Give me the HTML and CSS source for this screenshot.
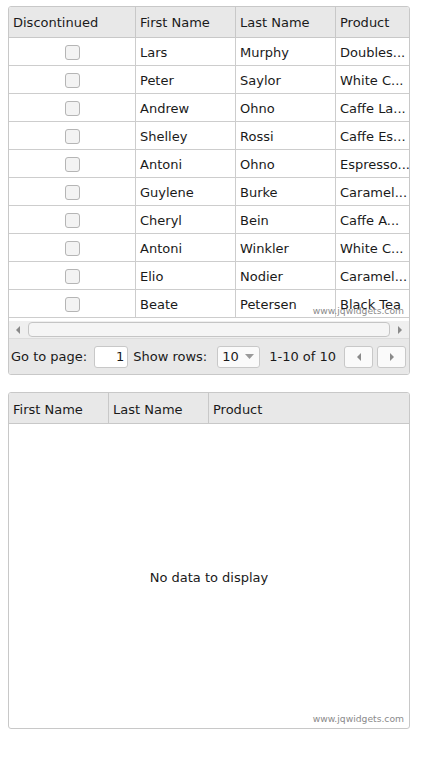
FILE: index.html
```html
<!DOCTYPE html>
<html>
<head>
<meta charset="utf-8">
<link rel="stylesheet" href="styles.css">
</head>
<body>
<div class="grid g1">
  <div class="head">
    <div class="hc c1">Discontinued</div>
    <div class="hc c2">First Name</div>
    <div class="hc c2">Last Name</div>
    <div class="hc c2">Product</div>
  </div>
  <div class="body b1">
    <div class="row"><div class="cell c1 chk"><span class="box"></span></div><div class="cell c2">Lars</div><div class="cell c2">Murphy</div><div class="cell c2">Doubles...</div></div>
    <div class="row"><div class="cell c1 chk"><span class="box"></span></div><div class="cell c2">Peter</div><div class="cell c2">Saylor</div><div class="cell c2">White C...</div></div>
    <div class="row"><div class="cell c1 chk"><span class="box"></span></div><div class="cell c2">Andrew</div><div class="cell c2">Ohno</div><div class="cell c2">Caffe La...</div></div>
    <div class="row"><div class="cell c1 chk"><span class="box"></span></div><div class="cell c2">Shelley</div><div class="cell c2">Rossi</div><div class="cell c2">Caffe Es...</div></div>
    <div class="row"><div class="cell c1 chk"><span class="box"></span></div><div class="cell c2">Antoni</div><div class="cell c2">Ohno</div><div class="cell c2">Espresso...</div></div>
    <div class="row"><div class="cell c1 chk"><span class="box"></span></div><div class="cell c2">Guylene</div><div class="cell c2">Burke</div><div class="cell c2">Caramel...</div></div>
    <div class="row"><div class="cell c1 chk"><span class="box"></span></div><div class="cell c2">Cheryl</div><div class="cell c2">Bein</div><div class="cell c2">Caffe A...</div></div>
    <div class="row"><div class="cell c1 chk"><span class="box"></span></div><div class="cell c2">Antoni</div><div class="cell c2">Winkler</div><div class="cell c2">White C...</div></div>
    <div class="row"><div class="cell c1 chk"><span class="box"></span></div><div class="cell c2">Elio</div><div class="cell c2">Nodier</div><div class="cell c2">Caramel...</div></div>
    <div class="row"><div class="cell c1 chk"><span class="box"></span></div><div class="cell c2">Beate</div><div class="cell c2">Petersen</div><div class="cell c2">Black Tea</div></div>
    <div class="mark">www.jqwidgets.com</div>
  </div>
  <div class="hscroll">
    <span class="arr"><svg width="6" height="8" viewBox="0 0 6 8"><path d="M5 0V8L1 4Z" fill="#8a8a8a"/></svg></span>
    <div class="thumb"></div>
    <span class="arr"><svg width="6" height="8" viewBox="0 0 6 8"><path d="M1 0V8L5 4Z" fill="#8a8a8a"/></svg></span>
  </div>
  <div class="pager">
    <span>Go to page:</span>
    <span class="inp">1</span>
    <span>Show rows:</span>
    <span class="dd">10<svg width="9" height="5" viewBox="0 0 9 5"><path d="M0 0H9L4.5 5Z" fill="#9a9a9a"/></svg></span>
    <span class="info">1-10 of 10</span>
    <span class="btn first"><svg width="6" height="8" viewBox="0 0 6 8"><path d="M5 0V8L1 4Z" fill="#8a8a8a"/></svg></span>
    <span class="btn last"><svg width="6" height="8" viewBox="0 0 6 8"><path d="M1 0V8L5 4Z" fill="#8a8a8a"/></svg></span>
  </div>
</div>

<div class="grid g2">
  <div class="head">
    <div class="hc c2">First Name</div>
    <div class="hc c2">Last Name</div>
    <div class="hc c3">Product</div>
  </div>
  <div class="body b2">
    <div class="empty">No data to display</div>
    <div class="mark">www.jqwidgets.com</div>
  </div>
</div>
</body>
</html>
```

FILE: styles.css
```css
html, body {
  margin: 0;
  padding: 0;
  background: #fff;
}
body {
  padding: 6px 0 0 8px;
  font-family: "DejaVu Sans", Verdana, sans-serif;
  font-size: 13px;
  color: #1a1a1a;
}
.grid {
  width: 402px;
  box-sizing: border-box;
  border: 1px solid #c8c8c8;
  border-radius: 3px;
  overflow: hidden;
  background: #fff;
}
.g2 {
  margin-top: 17px;
}
.head {
  display: flex;
  height: 31px;
  background: #e8e8e8;
  border-bottom: 1px solid #c8c8c8;
  box-sizing: border-box;
}
.g2 .head .hc {
  padding-top: 2px;
}
.hc {
  flex: none;
  box-sizing: border-box;
  border-right: 1px solid #c8c8c8;
  padding: 1px 0 0 4px;
  line-height: 29px;
  white-space: nowrap;
  overflow: hidden;
}
.c1 { width: 127px; }
.c2 { width: 100px; }
.c3 { flex: 1; border-right: none; }
.body {
  position: relative;
  overflow: hidden;
}
.b1 { height: 283px; }
.b2 { height: 304px; display: flex; align-items: center; justify-content: center; }
.row {
  display: flex;
  height: 28px;
  border-bottom: 1px solid #cdcdcd;
  box-sizing: border-box;
}
.cell {
  flex: none;
  box-sizing: border-box;
  border-right: 1px solid #cdcdcd;
  padding: 2px 0 0 4px;
  line-height: 25px;
  white-space: nowrap;
  overflow: hidden;
}
.chk {
  display: flex;
  align-items: center;
  justify-content: center;
  padding: 1px 0 0 0;
}
.box {
  width: 13px;
  height: 13px;
  border: 1px solid #b5b5b5;
  border-radius: 3px;
  background: #f3f3f3;
}
.mark {
  position: absolute;
  right: 5px;
  bottom: 4px;
  font-size: 9.2px;
  color: #8a8a8a;
  font-family: "DejaVu Sans", Verdana, sans-serif;
}
.b1 .mark { bottom: 5px; }
.hscroll {
  display: flex;
  align-items: center;
  height: 17px;
  background: #efefef;
  padding: 0 2px;
}
.arr {
  width: 14px;
  display: flex;
  justify-content: center;
  align-items: center;
}
.thumb {
  flex: 1;
  height: 15px;
  box-sizing: border-box;
  border: 1px solid #c5c5c5;
  border-radius: 4px;
  background: #f5f5f5;
  margin: 0 3px;
}
.pager {
  display: flex;
  align-items: center;
  height: 36px;
  background: #e8e8e8;
  border-top: 1px solid #dcdcdc;
  box-sizing: border-box;
  padding-left: 2px;
  white-space: nowrap;
}
.inp {
  width: 34px;
  height: 22px;
  box-sizing: border-box;
  background: #fff;
  border: 1px solid #c8c8c8;
  border-radius: 3px;
  text-align: right;
  padding-right: 3px;
  line-height: 20px;
  margin: 0 5px 0 7px;
}
.dd {
  display: flex;
  align-items: center;
  justify-content: space-between;
  width: 43px;
  height: 22px;
  box-sizing: border-box;
  background: #fafafa;
  border: 1px solid #c8c8c8;
  border-radius: 3px;
  padding: 0 5px 0 4px;
  margin-left: 10px;
}
.info {
  margin-left: 9px;
}
.btn {
  display: flex;
  align-items: center;
  justify-content: center;
  width: 29px;
  height: 22px;
  box-sizing: border-box;
  background: #fafafa;
  border: 1px solid #c8c8c8;
  border-radius: 3px;
}
.btn.first {
  margin-left: auto;
  margin-right: 4px;
}
.btn.last {
  margin-right: 3px;
}
.empty {
  margin-top: 2px;
}
```
